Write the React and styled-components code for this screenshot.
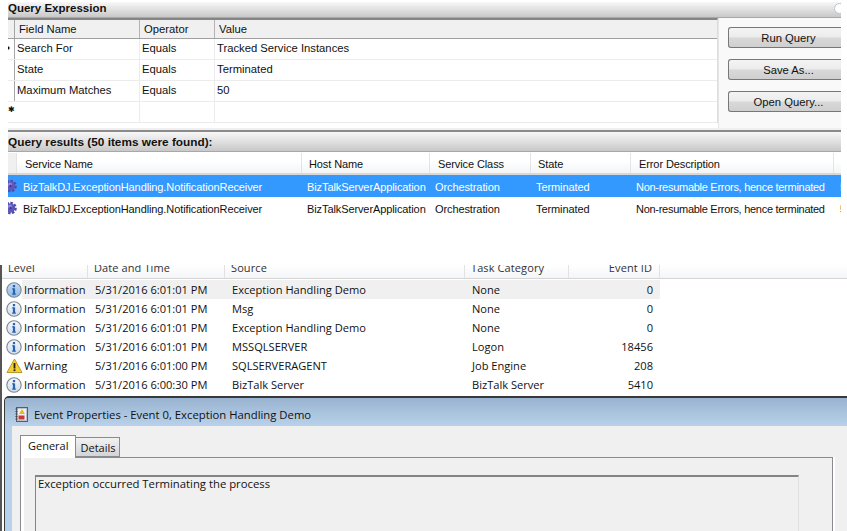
import React from 'react';
import styled, { createGlobalStyle } from 'styled-components';

const GlobalStyle = createGlobalStyle`
  html, body {
    margin: 0;
    padding: 0;
    background: #fff;
    overflow: hidden;
  }
  #root {
    width: 847px;
    height: 531px;
    overflow: hidden;
    font-family: "Liberation Sans", Arial, sans-serif;
    font-size: 11.25px;
    color: #111;
  }
`;

const SectionBar = styled.div`
  height: ${(p) => p.$height}px;
  box-sizing: border-box;
  padding-bottom: ${(p) => p.$lift}px;
  display: flex;
  align-items: center;
  justify-content: space-between;
  overflow: hidden;
  font-weight: bold;
  font-size: ${(p) => p.$size}px;
  background: linear-gradient(#f8f8f8, #c8c8c8);
  border-bottom: 1px solid #a8a8a8;
`;

const HelpDot = styled.span`
  width: 9px;
  height: 9px;
  margin: 2px -4px 0 0;
  border-radius: 50%;
  border: 1px solid #b9c4d4;
  background: #fff;
`;

/* top panel */
const QueryPanel = styled.section`
  margin: 2px 6px 0 8px;
`;

const QueryBody = styled.div`
  display: flex;
  height: 110px;
`;

const QueryGrid = styled.div`
  width: 710px;
  height: 105px;
  box-sizing: border-box;
  border-top: 2px solid #858585;
  border-right: 1px solid #dcdcdc;
`;

const ButtonColumn = styled.div`
  flex: 1;
  background: #f9f9f9;
  border-left: 1px solid #e6e6e6;
  padding: 9px 0 0 9px;
  display: flex;
  flex-direction: column;
  gap: 11px;
`;

const QueryButton = styled.button`
  height: 21px;
  padding: 0 0 0 7px;
  box-sizing: border-box;
  border: 1px solid #777;
  border-right: none;
  border-radius: 3px 0 0 3px;
  font: inherit;
  color: #111;
  background: linear-gradient(#f4f4f4 0%, #ececec 45%, #d8d8d8 55%, #cfcfcf 100%);
`;

const Row = styled.div`
  display: grid;
  grid-template-columns: ${(p) => p.$columns};
  height: ${(p) => p.$height}px;
  box-sizing: border-box;
  align-items: center;
  color: ${(p) => (p.$selected ? '#fff' : 'inherit')};
  background: ${(p) => (p.$selected ? '#3399ff' : 'transparent')};
`;

const QueryHeaderRow = styled(Row)`
  background: #f0f0f0;
  border-bottom: 1px solid #a0a0a0;
`;

const QueryRow = styled(Row)`
  border-bottom: 1px solid #ececec;
`;

const RowMarker = styled.div`
  height: 100%;
  box-sizing: border-box;
  border-right: ${(p) => (p.$plain ? 'none' : '1px solid #a6a6a6')};
  display: flex;
  align-items: ${(p) => (p.$plain ? 'flex-start' : 'center')};
  padding-top: ${(p) => (p.$plain ? 4 : 0)}px;
  font-size: 8px;
  line-height: 1;
  overflow: hidden;
`;

const Arrow = styled.span`
  width: 0;
  height: 0;
  margin-bottom: 2px;
  border-top: 2px solid transparent;
  border-bottom: 2px solid transparent;
  border-left: 2px solid #111;
`;

const Cell = styled.div`
  height: 100%;
  box-sizing: border-box;
  padding-left: ${(p) => p.$pad ?? 2}px;
  padding-bottom: ${(p) => p.$lift ?? 0}px;
  display: flex;
  align-items: center;
  white-space: nowrap;
  overflow: hidden;
  background: ${(p) => p.$fill ?? 'transparent'};
  border-right: ${(p) => (p.$line ? `1px solid ${p.$line}` : 'none')};
`;

/* results */
const ResultsPanel = styled.section`
  margin: 0 6px 0 8px;
`;

const TopRule = styled.div`
  height: 2px;
  background: #8a8a8a;
  border-top: 2px solid #f0f0f0;
`;

const ResultsHeader = styled(Row)`
  margin-top: 1px;
  background: linear-gradient(#fff 0%, #fff 40%, #f3f4f6 100%);
  border-bottom: 2px solid #d8d8d8;
`;

const ResultCell = styled(Cell)`
  font-size: 11px;
  letter-spacing: ${(p) => p.$tracking ?? -0.1}px;
  padding-top: 1px;
`;

const GearIcon = () => (
  <svg width="9" height="14" viewBox="0 0 9 14">
    <circle cx="2.5" cy="7" r="4.6" fill="#4f4aa8" stroke="#4f4aa8" strokeWidth="3.4" strokeDasharray="2.2 1.3" />
    <circle cx="2.5" cy="7" r="4.4" fill="#5f58bc" />
    <circle cx="2" cy="5.6" r="2" fill="#8f88dc" />
    <circle cx="2.5" cy="7" r="1.2" fill="#3b3690" />
  </svg>
);

/* event viewer + dialog */
const LowerWindow = styled.section`
  margin-top: 46px;
  height: 266px;
  border-left: 2px solid #555;
  display: flex;
  flex-direction: column;
`;

const EventHeader = styled(Row)`
  background: linear-gradient(#fff, #f4f5f7);
  border-bottom: 1px solid #d5d5d5;
  align-items: flex-end;
  margin-bottom: 1px;
  color: #333;
`;

const EventHeaderCell = styled(Cell)`
  align-items: flex-end;
  font-family: "Open Sans", sans-serif;
  font-size: 11px;
  line-height: 17px;
  letter-spacing: 0.1px;
  padding-bottom: 2px;
  justify-content: ${(p) => (p.$right ? 'flex-end' : 'flex-start')};
  padding-right: ${(p) => (p.$right ? 7 : 0)}px;
`;

const EventList = styled.div`
  display: flex;
  flex-direction: column;
`;

const EventRow = styled.div`
  position: relative;
  z-index: 0;
  height: 19px;
  display: grid;
  grid-template-columns: 4px 17px 65px 137px 240px 104px 91px;
  align-items: center;
  font-family: "Open Sans", sans-serif;
  font-size: 11.1px;
  &::before {
    content: '';
    display: ${(p) => (p.$active ? 'block' : 'none')};
    position: absolute;
    left: 20px;
    width: 638px;
    top: 0;
    bottom: 0;
    background: #f0f0f0;
    z-index: -1;
  }
`;

const EventCell = styled.div`
  white-space: nowrap;
  padding-left: ${(p) => p.$pad ?? 7}px;
  text-align: ${(p) => (p.$right ? 'right' : 'left')};
  padding-right: ${(p) => (p.$right ? 7 : 0)}px;
`;

const Dialog = styled.div`
  flex: 1;
  margin: 2px 0 0 2px;
  display: flex;
  flex-direction: column;
  border-top: 2px solid #3a3a3a;
  border-left: 1px solid #3a3a3a;
  border-top-left-radius: 5px;
  background: #b8d2ec;
  overflow: hidden;
`;

const TitleBar = styled.div`
  height: 28px;
  flex: none;
  display: flex;
  align-items: center;
  gap: 5px;
  padding: 5px 0 0 10px;
  box-sizing: border-box;
  font-family: "Open Sans", sans-serif;
  font-size: 11.3px;
  background: linear-gradient(#99b4d1, #b9d1ea);
`;

const DialogBody = styled.div`
  flex: 1;
  margin-left: 7px;
  background: #f0f0f0;
  padding: 8px 14px 0 8px;
  display: flex;
  flex-direction: column;
  font-family: "Open Sans", sans-serif;
  font-size: 11.3px;
`;

const TabStrip = styled.div`
  display: flex;
  align-items: flex-end;
  height: 23px;
  flex: none;
  font-size: 11px;
`;

const Tab = styled.div`
  box-sizing: border-box;
  height: ${(p) => (p.$active ? 23 : 20)}px;
  padding: ${(p) => (p.$active ? '0 7px 3px' : '0 4px')};
  display: flex;
  align-items: center;
  border: 1px solid #8a8a92;
  border-bottom: ${(p) => (p.$active ? 'none' : '1px solid #8a8a92')};
  border-left: ${(p) => (p.$active ? '1px solid #8a8a92' : 'none')};
  margin-bottom: ${(p) => (p.$active ? -1 : 0)}px;
  position: relative;
  z-index: 1;
  background: ${(p) => (p.$active ? '#fff' : 'linear-gradient(#f2f2f2, #d4d4d4)')};
`;

const TabPanel = styled.div`
  flex: 1;
  box-sizing: border-box;
  background: #f0f0f0;
  border-top: 1px solid #8a8a92;
  border-left: 1px solid #8a8a92;
  border-right: 1px solid #8a8a92;
  box-shadow: 2px 0 0 #fff;
  padding: 17px 33px 0 14px;
  position: relative;
  &::before {
    content: '';
    position: absolute;
    left: 0;
    top: 0;
    bottom: 0;
    width: 3px;
    background: #fff;
  }
`;

const MessageBox = styled.div`
  height: 100%;
  box-sizing: border-box;
  border-top: 2px solid #848484;
  border-left: 1px solid #848484;
  border-right: 1px solid #e0e0e0;
  padding: 0 0 0 2px;
  line-height: 14px;
`;

const InfoIcon = ({ active }) => (
  <svg width="16" height="16" viewBox="0 0 16 16">
    <defs>
      <linearGradient id={active ? 'infoA' : 'infoB'} x1="0" y1="0" x2="0" y2="1">
        <stop offset="0" stopColor={active ? '#c7dcf3' : '#f6f8fb'} />
        <stop offset="1" stopColor={active ? '#8db8e6' : '#cddcee'} />
      </linearGradient>
    </defs>
    <circle cx="8" cy="8" r="7.2" fill={`url(#${active ? 'infoA' : 'infoB'})`} stroke="#7d8794" strokeWidth="1.1" />
    <rect x="6.9" y="3" width="2.2" height="2.2" fill="#2a62b0" />
    <rect x="6.9" y="6.4" width="2.2" height="6" fill="#2a62b0" />
    <rect x="6" y="6.4" width="2" height="1" fill="#2a62b0" />
    <rect x="6" y="11.6" width="4" height="1" fill="#2a62b0" />
  </svg>
);

const WarningIcon = () => (
  <svg width="17" height="16" viewBox="0 0 17 16">
    <path d="M8.5 1 L16 14.5 H1 Z" fill="#f6d02e" stroke="#b89a2a" strokeWidth="1" strokeLinejoin="round" />
    <rect x="7.6" y="5" width="1.8" height="5.5" fill="#222" />
    <rect x="7.6" y="11.3" width="1.8" height="1.8" fill="#222" />
  </svg>
);

const LogIcon = () => (
  <svg width="14" height="15" viewBox="0 0 14 15">
    <rect x="1.5" y="0.5" width="11" height="14" fill="#b9c2cc" stroke="#555e6b" />
    <rect x="3" y="2" width="8" height="11" fill="#eef0f2" />
    <path d="M7 2 L10 7 H4 Z" fill="#e8b820" />
    <rect x="3.5" y="8.5" width="6" height="4" fill="#c83a3a" />
    <path d="M0.5 2 H2.5 M0.5 4.5 H2.5 M0.5 7 H2.5 M0.5 9.5 H2.5 M0.5 12 H2.5" stroke="#444" strokeWidth="1" />
  </svg>
);

const queryColumns = '7px 125px 75px 1fr';
const queryRows = [
  { field: 'Search For', op: 'Equals', value: 'Tracked Service Instances', marker: 'arrow' },
  { field: 'State', op: 'Equals', value: 'Terminated' },
  { field: 'Maximum Matches', op: 'Equals', value: '50' },
];

const resultColumns = '9px 285px 128px 101px 100px 203px 1fr';
const resultHeaders = [
  { label: 'Service Name', pad: 8 },
  { label: 'Host Name', pad: 7 },
  { label: 'Service Class', pad: 8 },
  { label: 'State', pad: 7 },
  { label: 'Error Description', pad: 8 },
];
const resultRow = [
  { text: 'BizTalkDJ.ExceptionHandling.NotificationReceiver', pad: 6 },
  { text: 'BizTalkServerApplication', pad: 5 },
  { text: 'Orchestration', pad: 5 },
  { text: 'Terminated', pad: 5 },
  { text: 'Non-resumable Errors, hence terminated', pad: 5, tracking: -0.28 },
];

const eventColumns = '86px 137px 240px 104px 91px 1fr';
const events = [
  { level: 'Information', date: '5/31/2016 6:01:01 PM', source: 'Exception Handling Demo', task: 'None', id: '0', active: true },
  { level: 'Information', date: '5/31/2016 6:01:01 PM', source: 'Msg', task: 'None', id: '0' },
  { level: 'Information', date: '5/31/2016 6:01:01 PM', source: 'Exception Handling Demo', task: 'None', id: '0' },
  { level: 'Information', date: '5/31/2016 6:01:01 PM', source: 'MSSQLSERVER', task: 'Logon', id: '18456' },
  { level: 'Warning', date: '5/31/2016 6:01:00 PM', source: 'SQLSERVERAGENT', task: 'Job Engine', id: '208', warning: true },
  { level: 'Information', date: '5/31/2016 6:00:30 PM', source: 'BizTalk Server', task: 'BizTalk Server', id: '5410' },
];

const ResultRow = ({ selected }) => (
  <Row $columns={resultColumns} $height={22} $selected={selected}>
    <Cell $pad={0}><GearIcon /></Cell>
    {resultRow.map((c) => (
      <ResultCell key={c.text} $pad={c.pad} $tracking={c.tracking}>{c.text}</ResultCell>
    ))}
    <ResultCell $pad={6}>5</ResultCell>
  </Row>
);

export default function App() {
  return (
    <>
      <GlobalStyle />
      <QueryPanel>
        <SectionBar $height={16} $lift={4} $size={11.5}>
          Query Expression
          <HelpDot />
        </SectionBar>
        <QueryBody>
          <QueryGrid>
            <QueryHeaderRow $columns={queryColumns} $height={19}>
              <RowMarker />
              <Cell $pad={4} $line="#b4b4b4">Field Name</Cell>
              <Cell $pad={4} $line="#b4b4b4">Operator</Cell>
              <Cell $pad={4}>Value</Cell>
            </QueryHeaderRow>
            {queryRows.map((r) => (
              <QueryRow key={r.field} $columns={queryColumns} $height={21}>
                <RowMarker>{r.marker === 'arrow' && <Arrow />}</RowMarker>
                <Cell $lift={2} $line="#ececec">{r.field}</Cell>
                <Cell $lift={2} $line="#ececec">{r.op}</Cell>
                <Cell $lift={2}>{r.value}</Cell>
              </QueryRow>
            ))}
            <QueryRow $columns={queryColumns} $height={21}>
              <RowMarker $plain>✱</RowMarker>
              <Cell $line="#ececec" />
              <Cell $line="#ececec" />
              <Cell />
            </QueryRow>
          </QueryGrid>
          <ButtonColumn>
            <QueryButton>Run Query</QueryButton>
            <QueryButton>Save As...</QueryButton>
            <QueryButton>Open Query...</QueryButton>
          </ButtonColumn>
        </QueryBody>
      </QueryPanel>
      <ResultsPanel>
        <TopRule />
        <SectionBar $height={20} $lift={0} $size={11.8}>Query results (50 items were found):</SectionBar>
        <ResultsHeader $columns={resultColumns} $height={22}>
          <Cell $pad={0} $line="#e4e4e4" $fill="#f0f0f0" />
          {resultHeaders.map((h) => (
            <ResultCell key={h.label} $pad={h.pad} $line="#e4e4e4">{h.label}</ResultCell>
          ))}
          <Cell />
        </ResultsHeader>
        <ResultRow selected />
        <ResultRow />
      </ResultsPanel>
      <LowerWindow>
        <EventHeader $columns={eventColumns} $height={14}>
          <EventHeaderCell $pad={6} $line="#e2e2e2">Level</EventHeaderCell>
          <EventHeaderCell $pad={6} $line="#e2e2e2">Date and Time</EventHeaderCell>
          <EventHeaderCell $pad={6} $line="#e2e2e2">Source</EventHeaderCell>
          <EventHeaderCell $pad={6} $line="#e2e2e2">Task Category</EventHeaderCell>
          <EventHeaderCell $right $line="#e2e2e2">Event ID</EventHeaderCell>
          <div />
        </EventHeader>
        <EventList>
          {events.map((e, i) => (
            <EventRow key={i} $active={e.active}>
              <span />
              {e.warning ? <WarningIcon /> : <InfoIcon active={e.active} />}
              <EventCell $pad={1}>{e.level}</EventCell>
              <EventCell>{e.date}</EventCell>
              <EventCell>{e.source}</EventCell>
              <EventCell>{e.task}</EventCell>
              <EventCell $right>{e.id}</EventCell>
            </EventRow>
          ))}
        </EventList>
        <Dialog>
          <TitleBar>
            <LogIcon />
            Event Properties - Event 0, Exception Handling Demo
          </TitleBar>
          <DialogBody>
            <TabStrip>
              <Tab $active>General</Tab>
              <Tab>Details</Tab>
            </TabStrip>
            <TabPanel>
              <MessageBox>Exception occurred Terminating the process</MessageBox>
            </TabPanel>
          </DialogBody>
        </Dialog>
      </LowerWindow>
    </>
  );
}
